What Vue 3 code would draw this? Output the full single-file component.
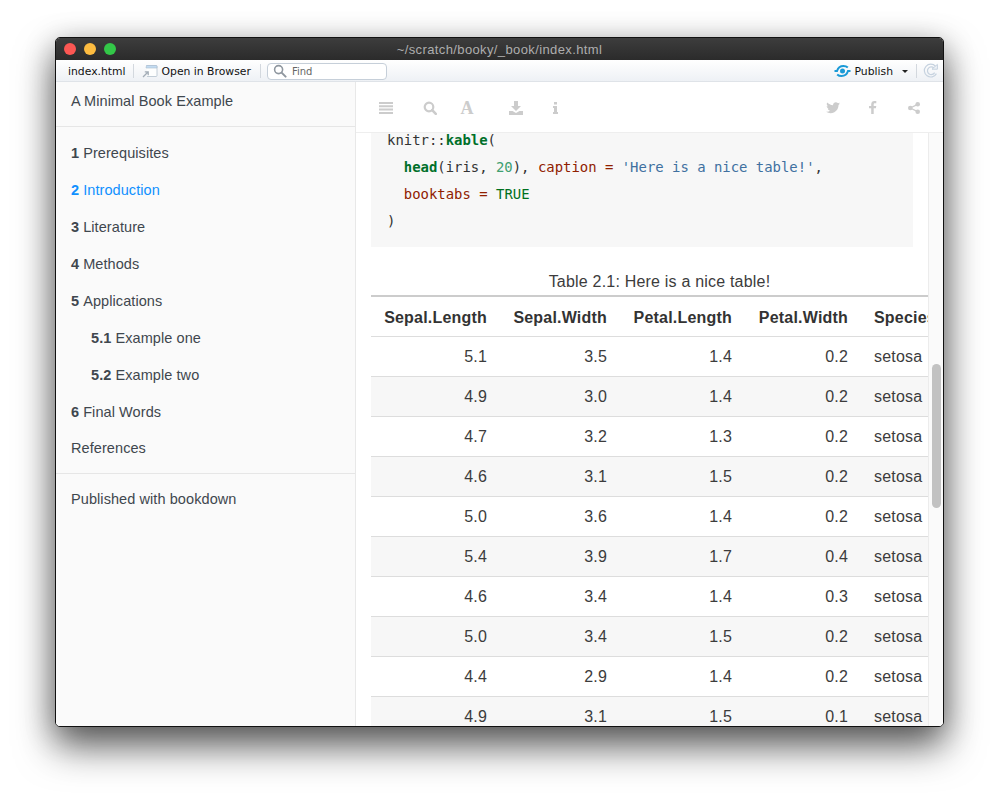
<script setup>
const nav = [
  { n: '1', t: 'Prerequisites' },
  { n: '2', t: 'Introduction', active: true },
  { n: '3', t: 'Literature' },
  { n: '4', t: 'Methods' },
  { n: '5', t: 'Applications' },
  { n: '5.1', t: 'Example one', sub: true },
  { n: '5.2', t: 'Example two', sub: true },
  { n: '6', t: 'Final Words' },
  { n: '', t: 'References' },
]
const rows = [
  ['5.1', '3.5', '1.4', '0.2'],
  ['4.9', '3.0', '1.4', '0.2'],
  ['4.7', '3.2', '1.3', '0.2'],
  ['4.6', '3.1', '1.5', '0.2'],
  ['5.0', '3.6', '1.4', '0.2'],
  ['5.4', '3.9', '1.7', '0.4'],
  ['4.6', '3.4', '1.4', '0.3'],
  ['5.0', '3.4', '1.5', '0.2'],
  ['4.4', '2.9', '1.4', '0.2'],
  ['4.9', '3.1', '1.5', '0.1'],
]
</script>

<template>
  <div class="stage">
    <div class="window">
      <div class="titlebar">
        <div class="lights">
          <span class="light red"></span>
          <span class="light yellow"></span>
          <span class="light green"></span>
        </div>
        <div class="title">~/scratch/booky/_book/index.html</div>
      </div>

      <div class="ide-bar">
        <span class="file">index.html</span>
        <span class="sep sep-a"></span>
        <svg class="browser-ic" width="16" height="14" viewBox="0 0 16 14">
          <path d="M4.500 1.500h9.500a1 1 0 0 1 1 1v9a1 1 0 0 1-1 1H5" fill="#fdfefe" stroke="#b4c1ce" stroke-width=".8" />
          <path d="M4.500 1.500h9.500a1 1 0 0 1 1 1v1.500H4z" fill="#c3dcf2" stroke="#a9bccf" stroke-width=".6" />
          <path d="M1 13l4.500-4.500M2.800 7.800h3.400v3.400" fill="none" stroke="#a2acb6" stroke-width="1.300" />
        </svg>
        <span class="open">Open in Browser</span>
        <span class="sep sep-b"></span>
        <div class="find">
          <svg width="14" height="14" viewBox="0 0 14 14">
            <circle cx="5.600" cy="5.600" r="4" fill="none" stroke="#8f979f" stroke-width="1.600" />
            <path d="M8.600 8.600l4 4" stroke="#8f979f" stroke-width="2" stroke-linecap="round" />
          </svg>
          <span class="find-text">Find</span>
        </div>
        <div class="bar-right">
          <svg class="pub-ic" width="17" height="12" viewBox="0 0 17 12">
            <path d="M.5 6H3C4 2.500 7 1 9.500 1c1.700 0 3.200.6 4.300 1.600" fill="none" stroke="#1a9ad7" stroke-width="2" />
            <path d="M16.500 6H14c-1 3.500-4 5-6.500 5-1.700 0-3.200-.6-4.300-1.600" fill="none" stroke="#1a9ad7" stroke-width="2" />
            <circle cx="8.500" cy="6" r="2.500" fill="#1a9ad7" />
          </svg>
          <span class="publish">Publish</span>
          <span class="caret"></span>
          <span class="sep sep-c"></span>
          <svg class="sync" width="16" height="16" viewBox="0 0 16 16">
            <path d="M13.400 10.600A6.400 6.400 0 1 1 12.600 3.400" fill="none" stroke="#c6d2df" stroke-width="1.200" />
            <path d="M11.600 9.600A3.800 3.800 0 1 1 10.900 5" fill="none" stroke="#c6d2df" stroke-width="1.200" />
            <path d="M9 6.200h5.400V1.400z" fill="#eef2f6" stroke="#c6d2df" />
          </svg>
        </div>
      </div>

      <div class="body">
        <aside class="side">
          <div class="side-head"><span class="side-row">A Minimal Book Example</span></div>
          <ul class="side-list">
            <li v-for="item in nav" :key="item.t" class="side-row" :class="{ active: item.active, sub: item.sub }">
              <b v-if="item.n">{{ item.n }}</b>{{ item.t }}
            </li>
          </ul>
          <div class="side-foot"><span class="side-row">Published with bookdown</span></div>
        </aside>

        <main class="main">
          <div class="book-bar">
            <div class="tools">
              <svg class="t-bars" width="14" height="12" viewBox="0 0 14 12"><path d="M0 0h14v2H0zM0 3.300h14v2H0zM0 6.600h14v2H0zM0 9.900h14v2H0z" fill="#ccc" /></svg>
              <svg class="t-search" width="14" height="14" viewBox="0 0 14 14"><circle cx="6" cy="6" r="4.300" fill="none" stroke="#ccc" stroke-width="2.200" /><path d="M9.200 9.200l3.600 3.600" stroke="#ccc" stroke-width="2.600" stroke-linecap="round" /></svg>
              <span class="t-font">A</span>
              <svg class="t-down" width="14" height="14" viewBox="0 0 14 14"><path d="M5 0h4v5h3L7 10 2 5h3zM0 10h3.500L7 12l3.500-2H14v4H0z" fill="#ccc" /></svg>
              <svg class="t-info" width="5" height="12" viewBox="0 0 5 12"><path d="M1 0h3v2.500H1zM0 4h4v6h1v2H0v-2h1V6H0z" fill="#ccc" /></svg>
            </div>
            <div class="tools-right">
              <svg class="t-tw" width="14" height="12" viewBox="0 0 14 12"><path d="M14 1.500c-.5.2-1.100.4-1.600.5.600-.4 1-.9 1.200-1.600-.5.3-1.100.6-1.800.7A2.800 2.800 0 0 0 7 3.200C4.700 3.100 2.600 2 1.200.500.400 1.800.800 3.400 2 4.200c-.5 0-.9-.100-1.300-.300 0 1.400 1 2.500 2.300 2.800-.4.100-.8.100-1.300 0 .4 1.100 1.400 1.900 2.600 1.900A5.700 5.700 0 0 1 0 9.800 8 8 0 0 0 12.500 2.900c.6-.4 1.100-.9 1.500-1.400z" fill="#ccc" /></svg>
              <svg class="t-fb" width="8" height="13" viewBox="0 0 8 13"><path d="M2.200 13V7.200H0V5h2.200V3.300C2.200 1.200 3.500 0 5.400 0c.9 0 1.700.100 1.900.100v2.200H6c-1 0-1.300.5-1.300 1.200V5h2.600l-.4 2.200H4.700V13z" fill="#ccc" /></svg>
              <svg class="t-share" width="12" height="12" viewBox="0 0 12 12"><circle cx="9.700" cy="2.300" r="2.300" fill="#ccc" /><circle cx="9.700" cy="9.700" r="2.300" fill="#ccc" /><circle cx="2.300" cy="6" r="2.300" fill="#ccc" /><path d="M9.700 2.300L2.300 6l7.400 3.700" fill="none" stroke="#ccc" stroke-width="1.300" /></svg>
            </div>
          </div>

          <div class="scroll-area">
            <div class="content">
              <div class="page">
                <pre class="code"><code>knitr::<span class="fn">kable</span>(
  <span class="fn">head</span>(iris, <span class="num">20</span>), <span class="arg">caption</span> <span class="arg">=</span> <span class="str">'Here is a nice table!'</span>,
  <span class="arg">booktabs</span> <span class="arg">=</span> <span class="bool">TRUE</span>
)</code></pre>
                <div class="table-clip">
                  <table>
                    <caption>Table 2.1: Here is a nice table!</caption>
                    <colgroup>
                      <col class="c1" /><col class="c2" /><col class="c3" /><col class="c4" /><col class="c5" />
                    </colgroup>
                    <thead>
                      <tr>
                        <th>Sepal.Length</th><th>Sepal.Width</th><th>Petal.Length</th><th>Petal.Width</th><th class="left">Species</th>
                      </tr>
                    </thead>
                    <tbody>
                      <tr v-for="(r, i) in rows" :key="i">
                        <td v-for="(v, j) in r" :key="j">{{ v }}</td>
                        <td class="left">setosa</td>
                      </tr>
                    </tbody>
                  </table>
                </div>
              </div>
            </div>
            <div class="scrollbar"><div class="thumb"></div></div>
          </div>
        </main>
      </div>
    </div>
  </div>
</template>

<style>
html, body { margin: 0; background: #fff; overflow: hidden; }
</style>

<style scoped>
.stage {
  width: 999px;
  height: 800px;
  box-sizing: border-box;
  padding: 37px 0 0 55px;
  overflow: hidden;
}
.window {
  width: 889px;
  height: 690px;
  box-sizing: border-box;
  border: 1px solid #111;
  border-radius: 5px;
  overflow: hidden;
  display: flex;
  flex-direction: column;
  background: #fff;
  box-shadow: 0 20px 38px 0 rgba(0, 0, 0, 0.58), 0 6px 30px rgba(0, 0, 0, 0.26);
}
.titlebar {
  height: 22px;
  flex: none;
  position: relative;
  display: flex;
  align-items: center;
  justify-content: center;
  background: linear-gradient(#3d3d3d, #2b2b2b);
}
.lights {
  position: absolute;
  left: 8px;
  top: 5px;
  display: flex;
  gap: 8px;
}
.light { width: 12px; height: 12px; border-radius: 50%; }
.red { background: #fc5753; }
.yellow { background: #fdbc40; }
.green { background: #33c748; }
.title {
  font: 13px "Liberation Sans", sans-serif;
  letter-spacing: 0.38px;
  color: #aeaeae;
}
.ide-bar {
  height: 22px;
  flex: none;
  box-sizing: border-box;
  display: flex;
  align-items: center;
  padding: 1px 0 0 12px;
  background: linear-gradient(#fff, #eef1f5);
  border-bottom: 1px solid #dfe3e8;
  font: 10.800px "DejaVu Sans", sans-serif;
  color: #111;
}
.sep { width: 1px; height: 14px; background: #d3d8de; flex: none; }
.sep-a { margin-left: 7px; }
.browser-ic { margin-left: 8px; }
.open { margin-left: 4px; }
.sep-b { margin-left: 9px; }
.find {
  margin-left: 6px;
  width: 120px;
  height: 17px;
  box-sizing: border-box;
  border: 1px solid #c6cfd9;
  border-radius: 4px;
  background: #fff;
  display: flex;
  align-items: center;
  padding-left: 5px;
  gap: 5px;
  font-size: 10px;
  color: #666;
}
.find-text { padding-top: 1px; }
.bar-right {
  margin-left: auto;
  display: flex;
  align-items: center;
  padding-right: 4px;
}
.publish { margin-left: 4px; }
.caret {
  margin-left: 9px;
  width: 0;
  height: 0;
  border: 3px solid transparent;
  border-top: 3px solid #222;
  border-bottom: 0;
}
.sep-c { margin-left: 8px; }
.sync { margin-left: 6px; }
.body { flex: 1; min-height: 0; display: flex; }
.side {
  width: 300px;
  flex: none;
  box-sizing: border-box;
  background: #fafafa;
  border-right: 1px solid #e8e8e8;
  font: 14.500px "Liberation Sans", sans-serif;
  letter-spacing: 0.08px;
  color: #3f474e;
}
.side-row {
  height: 37px;
  display: flex;
  align-items: center;
  padding-left: 15px;
  white-space: pre;
}
.side-row b { margin-right: 4px; }
.side-head { padding-bottom: 7px; border-bottom: 1px solid #e6e6e6; }
.side-foot { padding-top: 6px; border-top: 1px solid #e6e6e6; }
.side-list { list-style: none; margin: 0; padding: 7px 0 7px; }
.side-list .side-row:last-child { margin-top: -1px; }
.side-row.sub { padding-left: 35px; }
.side-row.active { color: #1090ff; }
.main { flex: 1; min-width: 0; display: flex; flex-direction: column; }
.book-bar {
  height: 51px;
  flex: none;
  box-sizing: border-box;
  border-bottom: 1px solid #eee;
  padding-top: 1px;
  display: flex;
  align-items: center;
  justify-content: space-between;
}
.tools, .tools-right { display: flex; align-items: center; }
.tools { padding-left: 23px; }
.t-search { margin-left: 30px; }
.t-font {
  margin-left: 22px;
  padding-top: 2px;
  font: bold 18px "Liberation Serif", serif;
  color: #ccc;
  width: 16px;
  text-align: center;
}
.t-down { margin-left: 34px; }
.t-info { margin-left: 30px; }
.tools-right { padding-right: 23px; }
.t-fb { margin-left: 29px; }
.t-share { margin-left: 31px; }
.scroll-area { flex: 1; min-height: 0; display: flex; }
.content { flex: 1; min-width: 0; overflow: hidden; }
.page { margin-top: -6px; padding-left: 15px; }
.code {
  margin: 0 15px 0 0;
  padding: 0 16px 11.500px;
  background: #f7f7f7;
  font: 13.930px/27px "DejaVu Sans Mono", monospace;
  color: #333;
}
.code code { font: inherit; }
.fn { font-weight: bold; color: #00702a; }
.num { color: #40a070; }
.arg { color: #902000; }
.str { color: #4070a0; }
.bool { color: #007020; }
.table-clip { overflow: hidden; margin-top: 23px; }
table {
  border-collapse: collapse;
  table-layout: fixed;
  width: 577px;
  font: 16px "Liberation Sans", sans-serif;
  letter-spacing: 0.2px;
  color: #3c3c3c;
}
caption { height: 25px; line-height: 23px; text-align: center; caption-side: top; }
.c1 { width: 129px; }
.c2 { width: 120px; }
.c3 { width: 125px; }
.c4 { width: 116px; }
.c5 { width: 87px; }
thead tr { border-top: 2px solid #ccc; }
th, td {
  height: 40px;
  box-sizing: border-box;
  padding: 0 13px;
  text-align: right;
  border-bottom: 1px solid #ddd;
  white-space: nowrap;
}
th { height: 41px; padding-top: 3px; font-weight: bold; color: #333; }
.left { text-align: left; }
tbody tr:nth-child(even) { background: #f7f7f7; }
.scrollbar {
  width: 15px;
  flex: none;
  box-sizing: border-box;
  background: #fafafa;
  border-left: 1px solid #ececec;
  padding: 231px 2px 0 3px;
}
.thumb { height: 144px; border-radius: 5px; background: #c2c2c2; }
</style>
